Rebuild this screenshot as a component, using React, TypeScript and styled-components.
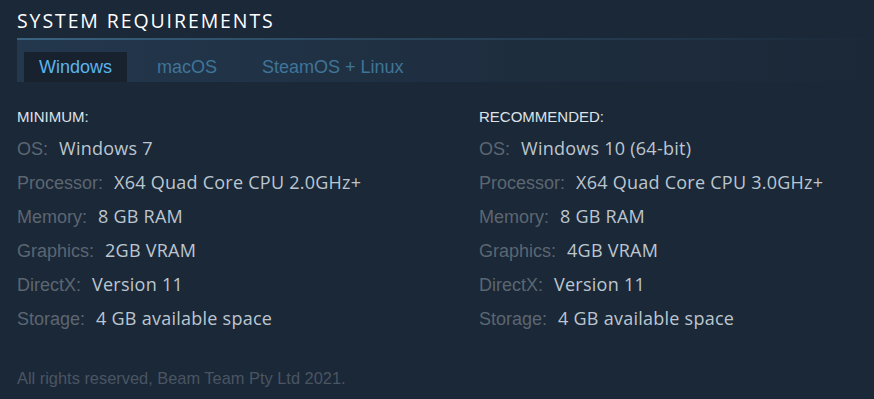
import React from "react";
import styled, { createGlobalStyle } from "styled-components";

const GlobalStyle = createGlobalStyle`
  html, body {
    margin: 0;
    padding: 0;
    background: #1b2838;
  }
  * { box-sizing: border-box; }
`;

const Page = styled.div`
  width: 874px;
  height: 399px;
  overflow: hidden;
  background: #1b2838;
  padding: 8px 0 0 17px;
`;

const Heading = styled.h2`
  margin: 0;
  padding-top: 1px;
  font-family: "Open Sans", "Noto Sans", sans-serif;
  font-weight: 500;
  font-size: 19.5px;
  line-height: 23px;
  letter-spacing: 1.9px;
  text-transform: uppercase;
  color: #ffffff;
`;

const TabBar = styled.div`
  margin-top: 6px;
  padding: 14px 0 0 7px;
  display: flex;
  gap: 15px;
  background:
    linear-gradient(to right, #3a6381 0%, #2a475e 40%, rgba(27, 40, 56, 0) 100%) top left / 100% 2px no-repeat,
    linear-gradient(to right, rgba(35, 55, 77, 1) 0%, rgba(30, 45, 62, 1) 60%, rgba(27, 40, 56, 1) 100%);
`;

const Tab = styled.div<{ $active?: boolean }>`
  height: 30px;
  padding: 0 15px;
  font-family: "Liberation Sans", Arial, sans-serif;
  font-size: 18px;
  line-height: 30px;
  color: ${(p) => (p.$active ? "#5ab4ee" : "#3f7599")};
  background: ${(p) => (p.$active ? "#18222e" : "transparent")};
`;

const Columns = styled.div`
  margin-top: 26px;
  display: grid;
  grid-template-columns: 462px 1fr;
`;

const Column = styled.div`
  display: flex;
  flex-direction: column;
`;

const ColTitle = styled.div`
  font-family: "Liberation Sans", Arial, sans-serif;
  font-size: 15px;
  line-height: 18px;
  color: #dde3e8;
  text-transform: uppercase;
  margin-bottom: 6px;
`;

const Row = styled.div`
  font-family: "Liberation Sans", Arial, sans-serif;
  font-size: 18px;
  line-height: 34px;
  height: 34px;
  white-space: nowrap;
`;

const Label = styled.span`
  color: #5b6671;
  margin-right: 11px;
`;

const Value = styled.span`
  font-family: "Open Sans", "Noto Sans", sans-serif;
  font-size: 18px;
  line-height: 1;
  letter-spacing: 0.25px;
  color: #bcc6cf;
`;

const Footer = styled.div`
  margin-top: 32px;
  font-family: "Liberation Sans", Arial, sans-serif;
  font-size: 16.4px;
  line-height: 20px;
  color: #4a5562;
`;

type Req = { label: string; value: string };

const minimum: Req[] = [
  { label: "OS:", value: "Windows 7" },
  { label: "Processor:", value: "X64 Quad Core CPU 2.0GHz+" },
  { label: "Memory:", value: "8 GB RAM" },
  { label: "Graphics:", value: "2GB VRAM" },
  { label: "DirectX:", value: "Version 11" },
  { label: "Storage:", value: "4 GB available space" },
];

const recommended: Req[] = [
  { label: "OS:", value: "Windows 10 (64-bit)" },
  { label: "Processor:", value: "X64 Quad Core CPU 3.0GHz+" },
  { label: "Memory:", value: "8 GB RAM" },
  { label: "Graphics:", value: "4GB VRAM" },
  { label: "DirectX:", value: "Version 11" },
  { label: "Storage:", value: "4 GB available space" },
];

const ReqColumn = ({ title, items }: { title: string; items: Req[] }) => (
  <Column>
    <ColTitle>{title}</ColTitle>
    {items.map((r) => (
      <Row key={r.label}>
        <Label>{r.label}</Label>
        <Value>{r.value}</Value>
      </Row>
    ))}
  </Column>
);

export default function App() {
  return (
    <>
      <GlobalStyle />
      <Page>
        <Heading>System Requirements</Heading>
        <TabBar>
          <Tab $active>Windows</Tab>
          <Tab>macOS</Tab>
          <Tab>SteamOS + Linux</Tab>
        </TabBar>
        <Columns>
          <ReqColumn title="Minimum:" items={minimum} />
          <ReqColumn title="Recommended:" items={recommended} />
        </Columns>
        <Footer>All rights reserved, Beam Team Pty Ltd 2021.</Footer>
      </Page>
    </>
  );
}
